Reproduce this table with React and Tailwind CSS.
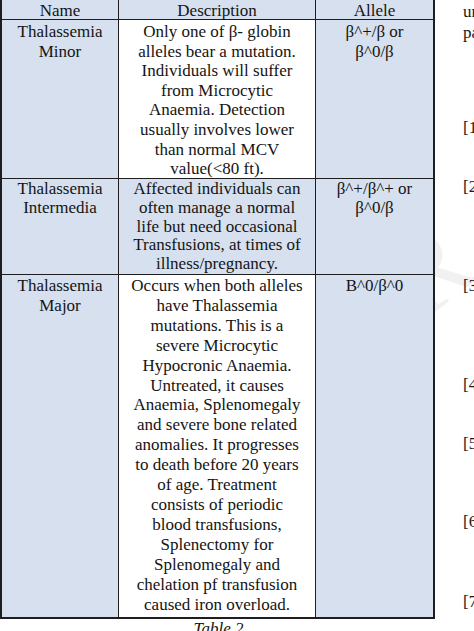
import React from "react";

function Lines({ lines, lead }) {
  return (
    <div className={`flex flex-col items-center ${lead}`}>
      {lines.map((l, i) => (
        <span key={i} className="whitespace-nowrap">{l}</span>
      ))}
    </div>
  );
}

const rows = [
  {
    name: ["Thalassemia", "Minor"],
    desc: [
      "Only one of β- globin",
      "alleles bear a mutation.",
      "Individuals will suffer",
      "from Microcytic",
      "Anaemia. Detection",
      "usually involves lower",
      "than normal MCV",
      "value(<80 ft).",
    ],
    allele: ["β^+/β  or", "β^0/β"],
    white: true,
    h: "h-[159px]",
    lead: "leading-[19.6px]",
    pt: "pt-[2px]",
  },
  {
    name: ["Thalassemia", "Intermedia"],
    desc: [
      "Affected individuals can",
      "often manage a normal",
      "life but need occasional",
      "Transfusions, at times of",
      "illness/pregnancy.",
    ],
    allele: ["β^+/β^+  or", "β^0/β"],
    white: false,
    h: "h-[96px]",
    lead: "leading-[18.8px]",
    pt: "pt-[1px]",
  },
  {
    name: ["Thalassemia", "Major"],
    desc: [
      "Occurs when both alleles",
      "have Thalassemia",
      "mutations. This is a",
      "severe Microcytic",
      "Hypocronic Anaemia.",
      "Untreated, it causes",
      "Anaemia, Splenomegaly",
      "and severe bone related",
      "anomalies. It progresses",
      "to death before 20 years",
      "of age. Treatment",
      "consists of periodic",
      "blood transfusions,",
      "Splenectomy for",
      "Splenomegaly and",
      "chelation pf transfusion",
      "caused iron overload.",
    ],
    allele: ["B^0/β^0"],
    white: true,
    h: "h-[342px]",
    lead: "leading-[19.9px]",
    pt: "pt-[1px]",
  },
];

export default function App() {
  return (
    <div className="relative w-[474px] h-[631px] overflow-hidden bg-white text-[17px] leading-[19.7px] text-[#141414] font-['Liberation_Serif','Times_New_Roman',serif]">
      <div className="pointer-events-none absolute left-[392px] top-[215px] rotate-[-38deg] text-[110px] leading-none text-[#f1f1f1] select-none">
        R
      </div>
      <div className="relative flex">
        <div className="flex flex-col w-[435px]">
          <div className="border-l-2 border-r-2 border-b-2 border-[#1e1e1e] flex flex-col">
            <div className="grid grid-cols-[117px_197px_117px] h-[20px] bg-[#d6e0ef] border-b-[1.5px] border-[#1e1e1e]">
              <div className="flex justify-center pt-[1px] border-r-[1.5px] border-[#1e1e1e]">Name</div>
              <div className="flex justify-center pt-[1px] border-r-[1.5px] border-[#1e1e1e]">Description</div>
              <div className="flex justify-center pt-[1px]">Allele</div>
            </div>
            {rows.map((r, i) => (
              <div
                key={i}
                className={`grid grid-cols-[117px_197px_117px] overflow-hidden ${r.h} ${i < rows.length - 1 ? "border-b-[1.5px] border-[#1e1e1e]" : ""}`}
              >
                <div className={`bg-[#d6e0ef] ${r.pt} border-r-[1.5px] border-[#1e1e1e]`}>
                  <Lines lines={r.name} lead={r.lead} />
                </div>
                <div
                  className={`${r.white ? "bg-white" : "bg-[#d6e0ef]"} ${r.pt} border-r-[1.5px] border-[#1e1e1e]`}
                >
                  <Lines lines={r.desc} lead={r.lead} />
                </div>
                <div className={`bg-[#d6e0ef] ${r.pt}`}>
                  <Lines lines={r.allele} lead={r.lead} />
                </div>
              </div>
            ))}
          </div>
          <div className="flex justify-center pl-[2px] italic">Table 2</div>
        </div>
        <div className="flex flex-col pl-[28px] text-[#1a1a1a]">
          <span className="mt-[2px]">und</span>
          <span className="mt-[1px]">pa</span>
          <span className="mt-[76px]">[1]</span>
          <span className="mt-[39px]">[2]</span>
          <span className="mt-[79px]">[3]</span>
          <span className="mt-[79px]">[4]</span>
          <span className="mt-[40px]">[5]</span>
          <span className="mt-[58px]">[6]</span>
          <span className="mt-[60px]">[7]</span>
        </div>
      </div>
    </div>
  );
}
